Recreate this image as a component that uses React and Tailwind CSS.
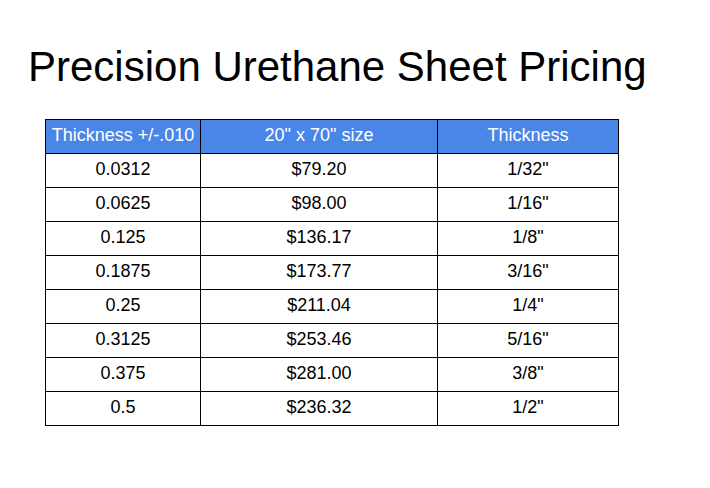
import React from 'react'

const rows = [
    ['0.0312', '$79.20', '1/32"'],
    ['0.0625', '$98.00', '1/16"'],
    ['0.125', '$136.17', '1/8"'],
    ['0.1875', '$173.77', '3/16"'],
    ['0.25', '$211.04', '1/4"'],
    ['0.3125', '$253.46', '5/16"'],
    ['0.375', '$281.00', '3/8"'],
    ['0.5', '$236.32', '1/2"'],
]

const App = () => {
    return (
        <div className="w-[710px] h-[488px] bg-white font-['Liberation_Sans',Arial,sans-serif] text-black">
            <h1 className="pt-[44px] pl-[28px] text-[42px] leading-[46px]">
                Precision Urethane Sheet Pricing
            </h1>

            <table className="ml-[45px] mt-[29px] border-collapse text-[18px] leading-[20px] text-center">
                <thead>
                    <tr className="bg-[#4a86e8] text-white h-[34px]">
                        <th className="w-[155px] border border-black font-normal pt-0 pb-[4px] px-0">Thickness +/-.010</th>
                        <th className="w-[237px] border border-black font-normal pt-0 pb-[4px] px-0">20" x 70" size</th>
                        <th className="w-[181px] border border-black font-normal pt-0 pb-[4px] px-0">Thickness</th>
                    </tr>
                </thead>
                <tbody>
                    {rows.map((r) => (
                        <tr key={r[0]} className="h-[34px]">
                            <td className="border border-black pt-0 pb-[4px] px-0">{r[0]}</td>
                            <td className="border border-black pt-0 pb-[4px] px-0">{r[1]}</td>
                            <td className="border border-black pt-0 pb-[4px] px-0">{r[2]}</td>
                        </tr>
                    ))}
                </tbody>
            </table>
        </div>
    )
}

export default App
